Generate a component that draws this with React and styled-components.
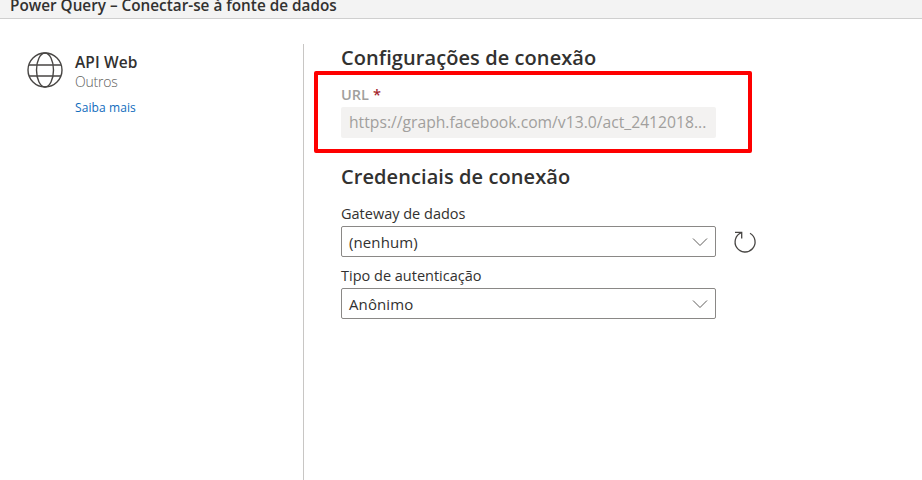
import React from "react";
import styled, { createGlobalStyle } from "styled-components";

const GlobalStyle = createGlobalStyle`
  html, body {
    margin: 0;
    padding: 0;
    background: #fff;
    overflow: hidden;
  }
  body {
    font-family: "Open Sans", "Noto Sans", sans-serif;
    color: #323130;
  }
`;

const Page = styled.div`
  position: relative;
  width: 922px;
  height: 480px;
  overflow: hidden;
`;

const TitleBar = styled.div`
  height: 18px;
  background: #f3f3f3;
  border-bottom: 1px solid #cfcfcf;
  padding-left: 10px;
  font-size: 15.3px;
  line-height: 11px;
  font-weight: 600;
  white-space: nowrap;
  overflow: hidden;
`;

const Body = styled.div`
  display: flex;
  height: 461px;
  padding-top: 25px;
  box-sizing: border-box;
`;

const Sidebar = styled.div`
  width: 304px;
  flex: none;
  display: flex;
  gap: 12px;
  padding: 8px 0 0 27px;
  box-sizing: border-box;
  border-right: 1px solid #c8c6c4;
`;

const GlobeIcon = styled.svg`
  width: 36px;
  height: 36px;
  flex: none;
`;

const ConnectorInfo = styled.div`
  display: flex;
  flex-direction: column;
`;

const ConnectorName = styled.div`
  font-size: 15.5px;
  line-height: 20px;
  font-weight: 600;
  letter-spacing: 0.1px;
`;

const ConnectorKind = styled.div`
  font-size: 14px;
  line-height: 20px;
  font-weight: 300;
  letter-spacing: -0.2px;
  color: #605e5c;
`;

const LearnMore = styled.a`
  font-size: 12px;
  line-height: 16px;
  margin-top: 8px;
  letter-spacing: 0.1px;
  color: #0f6cbd;
`;

const Main = styled.div`
  flex: 1;
  padding: 0 0 0 37px;
`;

const SectionTitle = styled.h2`
  margin: 0;
  font-size: 20px;
  line-height: 28px;
  font-weight: 600;
  letter-spacing: 0.08px;
  color: #323130;
`;

const UrlSection = styled.div`
  margin-top: 13px;
`;

const CredentialsTitle = styled(SectionTitle)`
  margin-top: 25px;
`;

const Label = styled.div`
  font-size: 14.5px;
  line-height: 20px;
  font-weight: ${(p) => (p.$disabled ? 600 : 500)};
  margin-bottom: 2px;
  color: ${(p) => (p.$disabled ? "#a19f9d" : "#323130")};
`;

const Required = styled.span`
  color: #a4262c;
  margin-left: 4px;
`;

const DisabledInput = styled.div`
  width: 375px;
  height: 31px;
  box-sizing: border-box;
  padding: 0 8px;
  background: #f3f2f1;
  border-radius: 2px;
  color: #a19f9d;
  font-size: 15.7px;
  line-height: 31px;
  white-space: nowrap;
`;

const FieldRow = styled.div`
  display: flex;
  align-items: center;
  gap: 17px;
`;

const Field = styled.div`
  margin-top: ${(p) => p.$top}px;
`;

const Select = styled.div`
  width: 375px;
  height: 31px;
  box-sizing: border-box;
  padding: 0 7px;
  border: 1px solid #8a8886;
  border-radius: 2px;
  display: flex;
  align-items: center;
  justify-content: space-between;
  font-size: 15px;
  letter-spacing: 0.1px;
`;

const Chevron = styled.svg`
  width: 16px;
  height: 10px;
`;

const RefreshIcon = styled.svg`
  width: 24px;
  height: 24px;
`;

const Highlight = styled.div`
  position: absolute;
  left: 314px;
  top: 71px;
  width: 438px;
  height: 82px;
  box-sizing: border-box;
  border: 4px solid #fe0000;
  border-radius: 2px;
`;

const ChevronDown = () => (
  <Chevron viewBox="0 0 16 10" fill="none" stroke="#605e5c" strokeWidth="1">
    <path d="M1 1.5 8 8.5 15 1.5" />
  </Chevron>
);

export default function App() {
  return (
    <Page>
      <GlobalStyle />
      <TitleBar>Power Query – Conectar-se à fonte de dados</TitleBar>
      <Body>
        <Sidebar>
          <GlobeIcon viewBox="0 0 36 36" fill="none" stroke="#484644" strokeWidth="1.4">
            <circle cx="18" cy="18" r="17" />
            <ellipse cx="18" cy="18" rx="8.5" ry="17" />
            <path d="M2 13h32M2 24h32" />
          </GlobeIcon>
          <ConnectorInfo>
            <ConnectorName>API Web</ConnectorName>
            <ConnectorKind>Outros</ConnectorKind>
            <LearnMore>Saiba mais</LearnMore>
          </ConnectorInfo>
        </Sidebar>
        <Main>
          <SectionTitle>Configurações de conexão</SectionTitle>
          <UrlSection>
            <Label $disabled>
              URL<Required>*</Required>
            </Label>
            <DisabledInput>https://graph.facebook.com/v13.0/act_2412018...</DisabledInput>
          </UrlSection>
          <CredentialsTitle>Credenciais de conexão</CredentialsTitle>
          <Field $top={13}>
            <Label>Gateway de dados</Label>
            <FieldRow>
              <Select>
                (nenhum)
                <ChevronDown />
              </Select>
              <RefreshIcon viewBox="0 0 24 24" fill="none" stroke="#484644" strokeWidth="1.3">
                <path d="M17 3.3A10 10 0 1 1 8.4 2.7" />
                <path d="M2 2.3H8.7V8.5" />
              </RefreshIcon>
            </FieldRow>
          </Field>
          <Field $top={9}>
            <Label>Tipo de autenticação</Label>
            <Select>
              Anônimo
              <ChevronDown />
            </Select>
          </Field>
        </Main>
      </Body>
      <Highlight />
    </Page>
  );
}
